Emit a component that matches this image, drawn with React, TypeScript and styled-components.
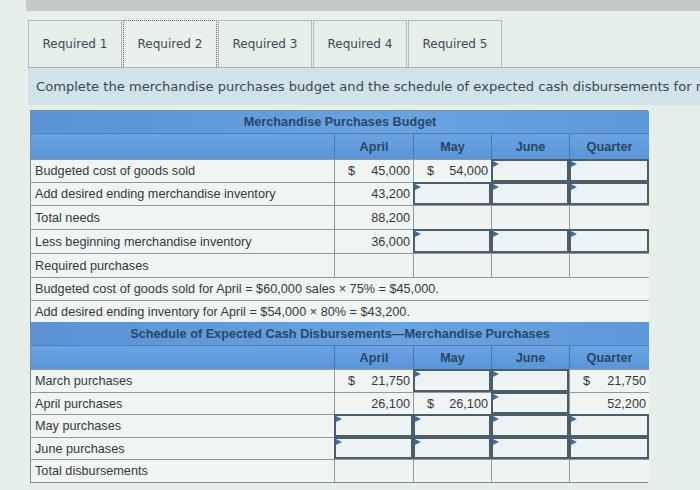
import React from "react";
import styled, { createGlobalStyle, css } from "styled-components";

const Global = createGlobalStyle`
  html, body { margin: 0; padding: 0; }
  body {
    width: 700px;
    height: 490px;
    overflow: hidden;
    background: #e6eeea;
    font-family: "Liberation Sans", Arial, sans-serif;
  }
`;

const Page = styled.div`
  width: 700px;
  height: 490px;
  display: flex;
  flex-direction: column;
  padding-left: 26px;
  box-sizing: border-box;
`;

const TopBar = styled.div`
  height: 11px;
  background: #c4cac5;
`;

const TabRow = styled.div`
  margin-top: 9px;
  margin-left: 2px;
  height: 47px;
  display: flex;
  border-bottom: 1px solid #a9b3b0;
`;

const Tab = styled.div<{ $active?: boolean }>`
  width: 94px;
  box-sizing: border-box;
  display: flex;
  align-items: center;
  justify-content: center;
  font-family: "DejaVu Sans", Verdana, sans-serif;
  font-size: 12px;
  color: #3c4a50;
  border: 1px solid #b3bcb8;
  border-bottom: none;
  margin-right: 1px;
  ${(p) =>
    p.$active &&
    css`
      border: 1px dotted #5f6a66;
      border-bottom: none;
      background: #eaf0ec;
    `}
`;

const Instruction = styled.div`
  margin-left: 2px;
  height: 37px;
  display: flex;
  align-items: center;
  padding-left: 8px;
  background: #d1e2e8;
  font-family: "DejaVu Sans", Verdana, sans-serif;
  font-size: 13.1px;
  color: #3a4953;
  white-space: nowrap;
  overflow: hidden;
`;

const Sheet = styled.div`
  margin-top: 5px;
  margin-left: 4px;
  width: 618px;
  display: grid;
  grid-template-columns: 303px 79px 78px 78px 80px;
  grid-template-rows: 23px 25px 23px 23px 24px 24px 24px 23px 22px 24px 23px 23px 22px 23px 22px 23px;
  border: 1px solid #7e8c92;
  box-sizing: border-box;
  font-size: 12.7px;
  color: #34393d;
`;

const Title = styled.div`
  grid-column: 1 / span 5;
  display: flex;
  align-items: center;
  justify-content: center;
  background: linear-gradient(90deg, #5a92d4, #68a3e2 60%, #5d98da);
  color: #2a4666;
  font-weight: bold;
  border-bottom: 1px solid #4f7fb5;
`;

const Head = styled.div<{ $first?: boolean }>`
  display: flex;
  align-items: center;
  justify-content: center;
  background: linear-gradient(180deg, #69a3e1, #5a95d8);
  color: #2a4666;
  font-weight: bold;
  border-left: ${(p) => (p.$first ? "none" : "1px solid #4d78aa")};
`;

const Label = styled.div`
  display: flex;
  align-items: center;
  padding-left: 4px;
  background: #f0f4f2;
  border-top: 1px solid #8e9a9e;
  white-space: nowrap;
`;

const Note = styled(Label)`
  grid-column: 1 / span 5;
`;

const Value = styled.div`
  display: flex;
  align-items: center;
  justify-content: space-between;
  padding: 0 3px 0 13px;
  background: #f0f4f2;
  border-top: 1px solid #8e9a9e;
  border-left: 1px solid #8e9a9e;
  white-space: nowrap;
`;

const Blank = styled.div`
  background: #eff3f2;
  border-top: 1px solid #8e9a9e;
  border-left: 1px solid #8e9a9e;
`;

const Input = styled.div`
  position: relative;
  background: #edf2f3;
  border: 2px solid #4b5d69;
  box-sizing: border-box;
  &::before {
    content: "";
    position: absolute;
    left: 0;
    top: 0;
    border-top: 3px solid transparent;
    border-bottom: 3px solid transparent;
    border-left: 6px solid #3f6ea6;
  }
`;

type Cell =
  | { kind: "v"; dollar?: boolean; text: string }
  | { kind: "i" }
  | { kind: "b" };

const V = (text: string, dollar = false): Cell => ({ kind: "v", text, dollar });
const I: Cell = { kind: "i" };
const B: Cell = { kind: "b" };

const renderCell = (c: Cell, k: number) => {
  if (c.kind === "v")
    return (
      <Value key={k}>
        <span>{c.dollar ? "$" : ""}</span>
        <span>{c.text}</span>
      </Value>
    );
  if (c.kind === "i") return <Input key={k} />;
  return <Blank key={k} />;
};

const budgetRows: [string, Cell[]][] = [
  ["Budgeted cost of goods sold", [V("45,000", true), V("54,000", true), I, I]],
  ["Add desired ending merchandise inventory", [V("43,200"), I, I, I]],
  ["Total needs", [V("88,200"), B, B, B]],
  ["Less beginning merchandise inventory", [V("36,000"), I, I, I]],
  ["Required purchases", [B, B, B, B]],
];

const cashRows: [string, Cell[]][] = [
  ["March purchases", [V("21,750", true), I, I, V("21,750", true)]],
  ["April purchases", [V("26,100"), V("26,100", true), I, V("52,200")]],
  ["May purchases", [I, I, I, I]],
  ["June purchases", [I, I, I, I]],
  ["Total disbursements", [B, B, B, B]],
];

const months = ["April", "May", "June", "Quarter"];

const Header = () => (
  <>
    <Head $first />
    {months.map((m) => (
      <Head key={m}>{m}</Head>
    ))}
  </>
);

const Rows = ({ rows }: { rows: [string, Cell[]][] }) => (
  <>
    {rows.map(([label, cells]) => (
      <React.Fragment key={label}>
        <Label>{label}</Label>
        {cells.map(renderCell)}
      </React.Fragment>
    ))}
  </>
);

export default function App() {
  return (
    <>
      <Global />
      <Page>
        <TopBar />
        <TabRow>
          <Tab>Required 1</Tab>
          <Tab $active>Required 2</Tab>
          <Tab>Required 3</Tab>
          <Tab>Required 4</Tab>
          <Tab>Required 5</Tab>
        </TabRow>
        <Instruction>
          Complete the merchandise purchases budget and the schedule of expected cash disbursements for merchandise purchases.
        </Instruction>
        <Sheet>
          <Title>Merchandise Purchases Budget</Title>
          <Header />
          <Rows rows={budgetRows} />
          <Note>Budgeted cost of goods sold for April = $60,000 sales × 75% = $45,000.</Note>
          <Note>Add desired ending inventory for April = $54,000 × 80% = $43,200.</Note>
          <Title>Schedule of Expected Cash Disbursements—Merchandise Purchases</Title>
          <Header />
          <Rows rows={cashRows} />
        </Sheet>
      </Page>
    </>
  );
}
